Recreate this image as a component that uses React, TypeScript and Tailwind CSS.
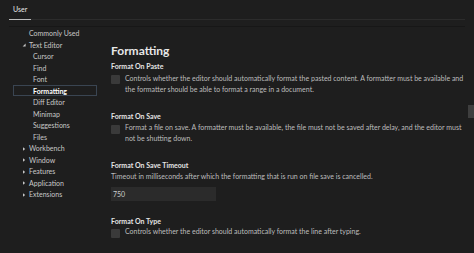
const tree = [
  { label: 'Commonly Used', depth: 0 },
  { label: 'Text Editor', depth: 0, arrow: 'down' },
  { label: 'Cursor', depth: 1 },
  { label: 'Find', depth: 1 },
  { label: 'Font', depth: 1 },
  { label: 'Formatting', depth: 1, selected: true },
  { label: 'Diff Editor', depth: 1 },
  { label: 'Minimap', depth: 1 },
  { label: 'Suggestions', depth: 1 },
  { label: 'Files', depth: 1 },
  { label: 'Workbench', depth: 0, arrow: 'right' },
  { label: 'Window', depth: 0, arrow: 'right' },
  { label: 'Features', depth: 0, arrow: 'right' },
  { label: 'Application', depth: 0, arrow: 'right' },
  { label: 'Extensions', depth: 0, arrow: 'right' },
]

function Arrow({ dir }: { dir: string }) {
  return (
    <svg width="4" height="4" viewBox="0 0 4 4" className="absolute left-[8px] top-[3.5px]">
      {dir === 'down' ? (
        <path d="M3.6 0.6 L3.6 3.6 L0.6 3.6 Z" fill="#c5c5c5" />
      ) : (
        <path d="M1 0.3 L3.2 2 L1 3.7 Z" fill="#c5c5c5" />
      )}
    </svg>
  )
}

function Checkbox() {
  return <div className="mt-[2.5px] h-[9px] w-[9px] shrink-0 rounded-[1px] bg-[#3a3a3a]" />
}

function Title({ children, className = '' }: { children: React.ReactNode; className?: string }) {
  return <div className={`text-[7px] font-bold leading-[10px] text-[#e4e4e4] ${className}`}>{children}</div>
}

const desc = 'whitespace-nowrap text-[7px] leading-[11px] text-[#bdbdbd]'

export default function App() {
  return (
    <div
      className="relative h-[253px] w-[474px] overflow-hidden bg-[#1e1e1e] text-[#cccccc]"
      style={{ fontFamily: 'Lato, "Open Sans", sans-serif' }}
    >
      <div className="mx-[9px] flex h-[20px] items-end border-b border-[#2c2c2c]">
        <div className="-mb-px flex h-[20px] items-center border-b border-[#bdbdbd] px-[4px] text-[7px] text-[#e8e8e8]">
          User
        </div>
      </div>
      <div className="mx-[9px] mt-[6px] h-px bg-[#171717]" />

      <div className="flex">
        <div className="w-[111px] shrink-0">
          {tree.map((t) => (
            <div
              key={t.label}
              className={`relative ml-[13px] h-[11.5px] w-[84px] text-[7px] leading-[10px] ${
                t.selected ? 'border border-[#3a4552] font-bold text-white' : 'border border-transparent text-[#c8c8c8]'
              }`}
            >
              {t.arrow && <Arrow dir={t.arrow} />}
              <span className={t.depth === 0 ? 'pl-[15px]' : 'pl-[19px]'}>{t.label}</span>
            </div>
          ))}
        </div>

        <div className="flex-1 pr-[10px]">
          <div className="mt-[16px] text-[12px] font-bold leading-[16px] text-[#e8e8e8]">Formatting</div>

          <Title className="mt-[2px]">Format On Paste</Title>
          <div className="flex gap-[5px] pt-[1.5px]">
            <Checkbox />
            <div className={desc}>
              Controls whether the editor should automatically format the pasted content. A formatter must be available and
              <br />
              the formatter should be able to format a range in a document.
            </div>
          </div>

          <Title className="mt-[16.5px]">Format On Save</Title>
          <div className="flex gap-[5px] pt-[1px]">
            <Checkbox />
            <div className={desc}>
              Format a file on save. A formatter must be available, the file must not be saved after delay, and the editor must
              <br />
              not be shutting down.
            </div>
          </div>

          <Title className="mt-[16px]">Format On Save Timeout</Title>
          <div className={`${desc} pt-[1px]`}>
            Timeout in milliseconds after which the formatting that is run on file save is cancelled.
          </div>
          <div className="mt-[5px] flex h-[14px] w-[105px] items-center bg-[#2b2b2b] pl-[2px] text-[7px] text-[#cccccc]">
            750
          </div>

          <Title className="mt-[14.5px]">Format On Type</Title>
          <div className="flex gap-[5px] pt-[0.5px]">
            <Checkbox />
            <div className={desc}>Controls whether the editor should automatically format the line after typing.</div>
          </div>
        </div>
      </div>

      <div className="absolute right-0 top-[105px] h-[13px] w-[6px] bg-[#3e3e3e]" />
    </div>
  )
}
